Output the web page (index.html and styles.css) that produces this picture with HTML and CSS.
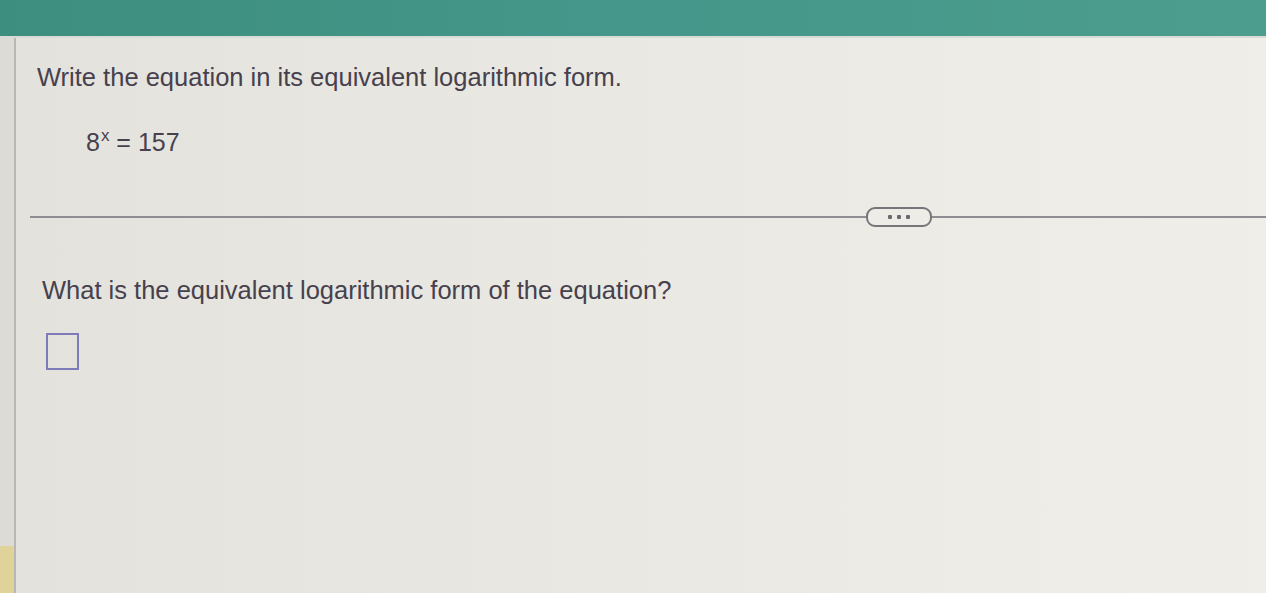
FILE: index.html
```html
<!DOCTYPE html>
<html>
<head>
<meta charset="utf-8">
<link rel="stylesheet" href="styles.css">
</head>
<body>
<div class="topbar"></div>
<div class="main">
  <aside class="side">
    <div class="side-fill"></div>
    <div class="side-yellow"></div>
  </aside>
  <section class="content">
    <p class="prompt">Write the equation in its equivalent logarithmic form.</p>
    <p class="equation">8<sup>x</sup> = 157</p>
    <div class="divider">
      <span class="line left"></span>
      <span class="more"><i></i><i></i><i></i></span>
      <span class="line right"></span>
    </div>
    <p class="question">What is the equivalent logarithmic form of the equation?</p>
    <div class="answer"></div>
  </section>
</div>
</body>
</html>
```
FILE: styles.css
```css
html, body {
  margin: 0;
  padding: 0;
  height: 100%;
  overflow: hidden;
}
body {
  font-family: "Liberation Sans", Arial, sans-serif;
  background: #e9e7e2;
  display: flex;
  flex-direction: column;
}
.topbar {
  height: 36px;
  background: linear-gradient(90deg, #3d8e7e 0%, #44978a 50%, #4c9d8d 100%);
  border-bottom: 2px solid #d9dcd6;
  flex: none;
}
.main {
  flex: 1;
  display: flex;
}
.side {
  width: 14px;
  border-right: 2px solid #b9b7b5;
  display: flex;
  flex-direction: column;
  background: #dddbd6;
}
.side-fill { flex: 1; }
.side-yellow {
  height: 47px;
  background: #e0d39a;
}
.content {
  flex: 1;
  background: linear-gradient(90deg, #e4e2dd 0%, #eae8e3 45%, #efeee9 100%);
  color: #46414d;
  padding-top: 24px;
}
.prompt {
  margin: 0 0 0 21px;
  font-size: 25.5px;
  line-height: 30px;
}
.equation {
  margin: 35px 0 0 70px;
  font-size: 25px;
  line-height: 30px;
}
.equation sup {
  font-size: 17px;
  vertical-align: 10px;
  line-height: 0;
  margin-left: 1px;
}
.divider {
  display: flex;
  align-items: center;
  margin: 50px 0 0 14px;
}
.line {
  height: 2px;
  background: #8f8d92;
  flex: 1;
}
.line.left { flex: none; width: 836px; }
.more {
  width: 62px;
  height: 16px;
  border: 2px solid #77757a;
  border-radius: 9px;
  display: flex;
  align-items: center;
  justify-content: center;
  gap: 5px;
  background: #edece7;
}
.more i {
  width: 4px;
  height: 4px;
  background: #6b6970;
  border-radius: 1px;
}
.question {
  margin: 48px 0 0 26px;
  font-size: 25.5px;
  line-height: 30px;
}
.answer {
  margin: 28px 0 0 30px;
  border: 2px solid #7d7bb8;
  box-sizing: border-box;
  width: 33px;
  height: 37px;
}
```
